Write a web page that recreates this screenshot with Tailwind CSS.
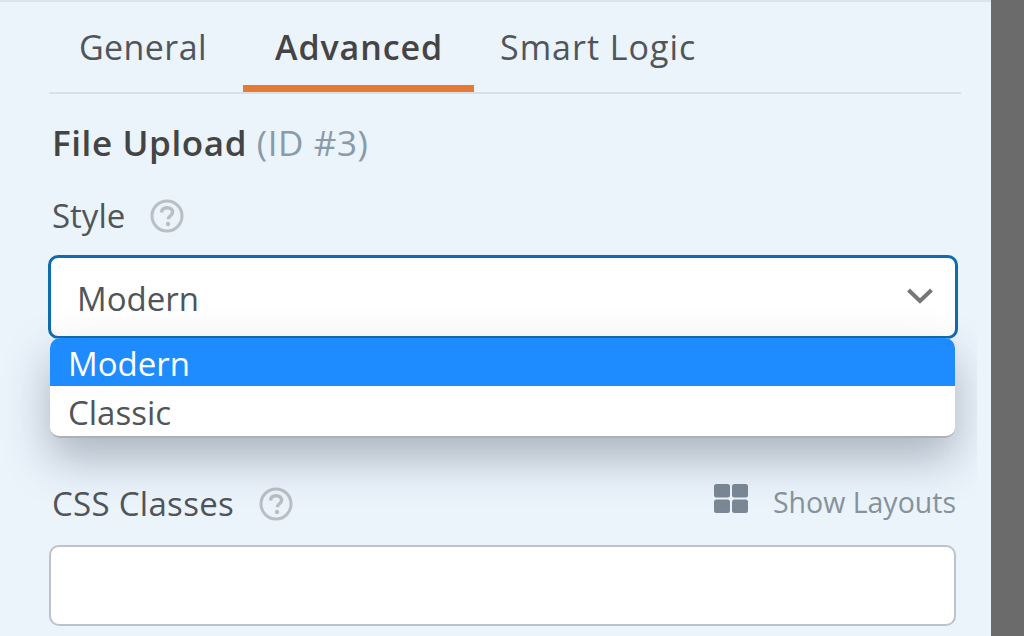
<!DOCTYPE html>
<html lang="en">
<head>
    <meta charset="UTF-8">
    <title>File Upload</title>
    <script src="https://cdn.jsdelivr.net/npm/@tailwindcss/browser@4"></script>
</head>
<body class="w-[1024px] h-[636px] overflow-hidden bg-[#6b6b6b] font-['Open_Sans','Noto_Sans',sans-serif] antialiased">
    <div class="w-[991px] h-[636px] overflow-hidden bg-[#ebf3fb] border-t-2 border-[#dce4ee] pl-[49px] pr-[30px]">
        <nav class="flex h-[92px] border-b-2 border-[#d8e0ea] text-[34px] text-[#50555a]">
            <a class="w-[194px] pl-[30px] pt-[22px] leading-[46px] tracking-[0.4px]">General</a>
            <a class="w-[231px] pl-[32px] pt-[22px] leading-[46px] h-[90px] border-b-[7px] border-[#e77a33] font-semibold text-[#444] tracking-[0.9px]">Advanced</a>
            <a class="pl-[26px] pt-[22px] leading-[46px] tracking-[1px]">Smart Logic</a>
        </nav>
        <h2 class="mt-[27px] ml-[3px] text-[35px] leading-[44px] font-semibold text-[#444] tracking-[0.6px]">File Upload <span class="font-normal text-[#8a9aa9]">(ID #3)</span></h2>
        <div class="mt-[29px] ml-[3px] flex items-center gap-[25px] h-[44px] text-[33px] text-[#50555a]">
            <span>Style</span>
            <svg class="w-[34px] h-[34px]" viewBox="0 0 34 34" fill="none">
                <circle cx="17" cy="17" r="15" stroke="#b9bfc4" stroke-width="3"/>
                <path d="M11.5 13.5c.3-3 2.6-4.8 5.6-4.8 3.1 0 5.5 1.8 5.5 4.5 0 3.5-4.3 3.6-4.3 7" stroke="#b9bfc4" stroke-width="3.4"/>
                <circle cx="18" cy="25" r="2.2" fill="#b9bfc4"/>
            </svg>
        </div>
        <div class="relative mt-[17px] -ml-[1px] w-[910px] h-[84px]">
            <div class="flex items-center justify-between w-full h-full pl-[26px] pr-[21px] bg-white border-[3px] border-[#0f6cae] rounded-[10px] text-[33px] text-[#50555a]">
                <span class="pt-[4px]">Modern</span>
                <svg class="w-[28px] h-[18px] mb-[3px]" viewBox="0 0 28 18" fill="none"><path d="M2.5 3 14 14 25.5 3" stroke="#777" stroke-width="4"/></svg>
            </div>
            <div class="absolute left-[2px] top-[83px] w-[905px] h-[100px] bg-white rounded-[10px] overflow-hidden border-b-2 border-[#b0b0b0] shadow-[0_20px_45px_rgba(50,60,80,0.35)] [clip-path:inset(-100px_-22px_-100px_-100px)] text-[33px] leading-[49px]">
                <div class="h-[48px] pl-[18px] pt-[1px] bg-[#1e8bff] text-white">Modern</div>
                <div class="h-[49px] pl-[18px] pt-[2px] text-[#50555a]">Classic</div>
            </div>
        </div>
        <div class="mt-[143px] ml-[3px] flex items-center justify-between w-[904px] h-[44px]">
            <div class="flex items-center gap-[25px] text-[33px] text-[#50555a] tracking-[0.3px]">
                <span>CSS Classes</span>
                <svg class="w-[34px] h-[34px]" viewBox="0 0 34 34" fill="none">
                    <circle cx="17" cy="17" r="15" stroke="#b9bfc4" stroke-width="3"/>
                    <path d="M11.5 13.5c.3-3 2.6-4.8 5.6-4.8 3.1 0 5.5 1.8 5.5 4.5 0 3.5-4.3 3.6-4.3 7" stroke="#b9bfc4" stroke-width="3.4"/>
                    <circle cx="18" cy="25" r="2.2" fill="#b9bfc4"/>
                </svg>
            </div>
            <div class="flex items-center gap-[25px] mb-[4px] text-[28.5px] text-[#86939f]">
                <svg class="w-[34px] h-[30px] mb-[7px]" viewBox="0 0 34 30" fill="#7a8794">
                    <rect x="0" y="0" width="16" height="13.5" rx="2.5"/>
                    <rect x="18" y="0" width="16" height="13.5" rx="2.5"/>
                    <rect x="0" y="15.5" width="16" height="13.5" rx="2.5"/>
                    <rect x="18" y="15.5" width="16" height="13.5" rx="2.5"/>
                </svg>
                <span>Show Layouts</span>
            </div>
        </div>
        <div class="mt-[19px] w-[907px] h-[81px] bg-white border-2 border-[#bcc3cb] rounded-[10px]"></div>
    </div>
</body>
</html>
